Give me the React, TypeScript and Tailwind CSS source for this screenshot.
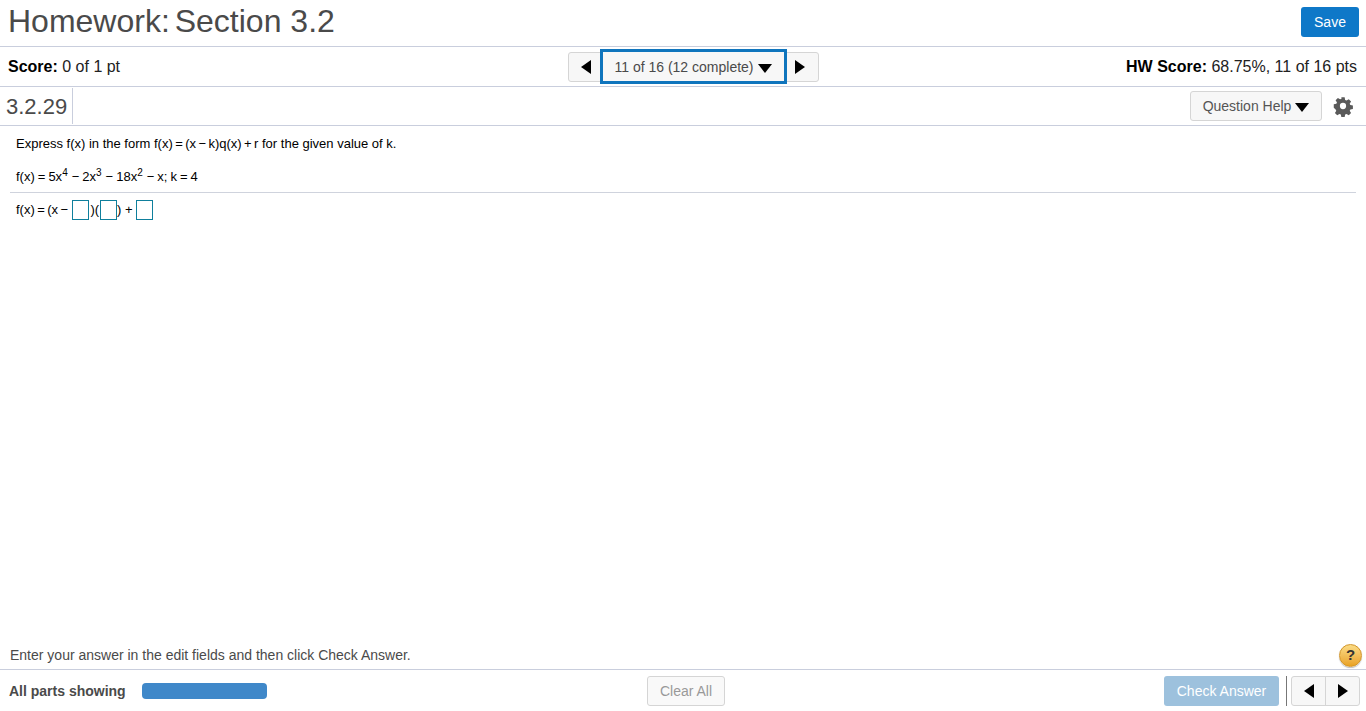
const Left = ({ className = '' }: { className?: string }) => (
  <svg viewBox="0 0 10 14" className={`w-[10px] h-[14px] ${className}`}>
    <path d="M10 0V14L0 7Z" fill="#000" />
  </svg>
);

const Right = ({ className = '' }: { className?: string }) => (
  <svg viewBox="0 0 10 14" className={`w-[10px] h-[14px] ${className}`}>
    <path d="M0 0V14L10 7Z" fill="#000" />
  </svg>
);

const Down = () => (
  <svg viewBox="0 0 14 9" className="w-[14px] h-[9px] ml-[4px] mt-[2px]">
    <path d="M0 0H14L7 9Z" fill="#000" />
  </svg>
);

const Gear = () => (
  <svg viewBox="0 0 24 24" className="w-[22px] h-[22px] -ml-[1px] mr-[1px]">
    <path
      fill="#5a5a5a"
      fillRule="evenodd"
      d="M10 1.5h4l.6 3.1c.6.2 1.2.5 1.7.8l2.7-1.7 2.8 2.8-1.7 2.7c.3.5.6 1.1.8 1.7l3.1.6v4l-3.1.6c-.2.6-.5 1.2-.8 1.7l1.7 2.7-2.8 2.8-2.7-1.7c-.5.3-1.1.6-1.7.8l-.6 3.1h-4l-.6-3.1c-.6-.2-1.2-.5-1.7-.8l-2.7 1.7-2.8-2.8 1.7-2.7c-.3-.5-.6-1.1-.8-1.7L.8 14v-4l3.1-.6c.2-.6.5-1.2.8-1.7L3 5l2.8-2.8 2.7 1.7c.5-.3 1.1-.6 1.7-.8ZM12 8.2a3.8 3.8 0 1 0 0 7.6 3.8 3.8 0 0 0 0-7.6Z"
      transform="translate(1.2 1.2) scale(.9)"
    />
  </svg>
);

const AnswerBox = () => (
  <span className="inline-block w-[17px] h-[20px] border border-[#0f7f9c] bg-white" />
);

export default function App() {
  return (
    <div className="h-screen flex flex-col bg-white text-[#4a4a4a] font-['Liberation_Sans',Arial,sans-serif] overflow-hidden">
      <header className="h-[47px] shrink-0 flex items-center justify-between pl-[8px] pr-[7px] pb-[4px] border-b border-[#c9cedd]">
        <h1 className="text-[32px] leading-none text-[#4a4a4a]">
          <span className="-mr-[4px]">Homework:</span> Section 3.2
        </h1>
        <button className="w-[58px] h-[30px] mt-[2px] rounded-[3px] bg-[#0e78c8] text-white text-[14px]">Save</button>
      </header>

      <div className="h-[40px] shrink-0 grid grid-cols-3 items-center px-[8px] border-b border-[#c9cedd] text-[16px] text-[#222]">
        <div>
          <b className="text-black">Score:</b> 0 of 1 pt
        </div>
        <div className="flex justify-center items-center pl-[20px]">
          <div className="flex items-center h-[30px] bg-[#f7f7f7] border border-[#d5d5d5] rounded-[3px] relative">
            <button className="w-[31px] h-full flex items-center justify-center pl-[4px]">
              <Left />
            </button>
            <button className="w-[187px] h-[35px] -my-[3px] flex items-center justify-center bg-[#f7f7f7] border-[3px] border-[#0f75bd] text-[14px] text-[#4a4a4a] pt-[2px]">
              11 of 16 (12 complete)
              <Down />
            </button>
            <button className="w-[31px] h-full flex items-center justify-center pr-[4px]">
              <Right />
            </button>
          </div>
        </div>
        <div className="text-right pr-[1px]">
          <b className="text-black">HW Score:</b> 68.75%, 11 of 16 pts
        </div>
      </div>

      <div className="h-[39px] shrink-0 flex items-center justify-between border-b border-[#c9cedd] pr-[11px]">
        <div className="h-[36px] w-[73px] flex items-center pl-[6px] border-r border-[#c9cedd] text-[22px] text-[#4a4a4a]">3.2.29</div>
        <div className="flex items-center gap-[11px]">
          <button className="w-[132px] h-[30px] flex items-center justify-center bg-[#f7f7f7] border border-[#d5d5d5] rounded-[3px] text-[14px] text-[#555]">
            Question Help
            <Down />
          </button>
          <Gear />
        </div>
      </div>

      <main className="flex-1 min-h-0 px-[10px] text-[13px] text-black">
        <p className="pl-[6px] pt-[10px] leading-[16px]">
          Express f(x) in the form <span className="[word-spacing:-1.2px]">f(x) = (x − k)q(x) + r</span> for the given value of k.
        </p>
        <p className="pl-[6px] mt-[15px] leading-[19px] pb-[6px] border-b border-[#cfd3dd] [word-spacing:-0.6px]">
          f(x) = 5x<sup className="text-[10px] mr-[1px]">4</sup> − 2x<sup className="text-[10px] mr-[1px]">3</sup> − 18x<sup className="text-[10px] mr-[1px]">2</sup> − x; k = 4
        </p>
        <div className="pl-[6px] mt-[7px] flex items-center [word-spacing:-1.2px]">
          <span className="mr-[2px]">f(x) = (x −&nbsp;</span>
          <AnswerBox />
          <span className="px-[1px]">)(</span>
          <AnswerBox />
          <span className="[word-spacing:0px]">) +&nbsp;</span>
          <AnswerBox />
        </div>
      </main>

      <div className="h-[34px] shrink-0 flex items-center justify-between pl-[10px] pr-[4px] text-[14px] text-[#4a4a4a]">
        <span className="mt-[6px]">Enter your answer in the edit fields and then click Check Answer.</span>
        <span className="w-[23px] h-[23px] mt-[6px] rounded-full bg-gradient-to-b from-[#fbdc85] to-[#e9a21f] border border-[#d2952a] shadow-[0_1px_1px_rgba(0,0,0,0.25)] flex items-center justify-center text-[15px] font-bold text-[#333]">?</span>
      </div>

      <footer className="h-[42px] shrink-0 flex items-center justify-between border-t border-[#c9cedd] pl-[9px] pr-[6px] text-[14px] relative">
        <div className="flex items-center w-[260px]">
          <b className="text-[#4a4a4a] w-[133px] pt-[2px]">All parts showing</b>
          <span className="w-[125px] h-[16px] rounded-[4px] bg-[#3f88c9]" />
        </div>
        <button className="absolute left-[647px] top-[6px] w-[78px] h-[30px] bg-[#f9f9f9] border border-[#d5d5d5] rounded-[3px] text-[#999]">Clear All</button>
        <div className="flex items-center">
          <button className="w-[115px] h-[30px] rounded-[3px] bg-[#9dc1dd] text-white pt-[2px]">Check Answer</button>
          <span className="w-px h-[30px] bg-[#777] ml-[7px] mr-[4px]" />
          <div className="flex h-[30px] w-[69px] bg-[#f7f7f7] border border-[#d5d5d5] rounded-[3px]">
            <span className="flex-1 flex items-center justify-center border-r border-[#d5d5d5]"><Left /></span>
            <span className="flex-1 flex items-center justify-center"><Right /></span>
          </div>
        </div>
      </footer>
    </div>
  );
}
